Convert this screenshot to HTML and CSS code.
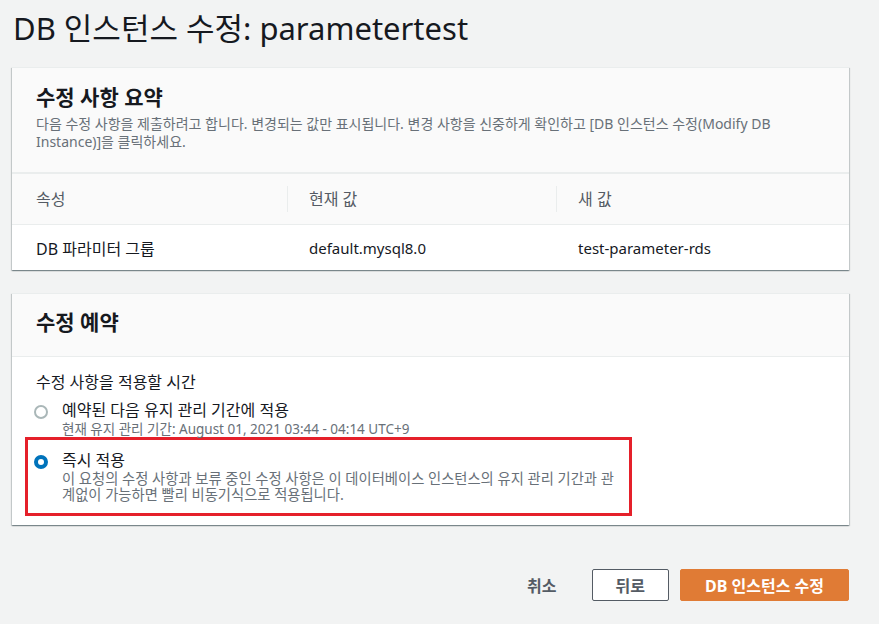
FILE: index.html
```html
<!DOCTYPE html>
<html lang="ko">
<head>
  <meta charset="utf-8">
  <title>DB 인스턴스 수정: parametertest</title>
  <link rel="stylesheet" href="styles.css">
</head>
<body>
  <div class="page">
    <h1 class="page-title">DB 인스턴스 수정: parametertest</h1>

    <div class="card">
      <div class="card-header">
        <h2>수정 사항 요약</h2>
        <p class="card-desc">다음 수정 사항을 제출하려고 합니다. 변경되는 값만 표시됩니다. 변경 사항을 신중하게 확인하고 [DB 인스턴스 수정(Modify DB Instance)]을 클릭하세요.</p>
      </div>
      <div class="diff-table">
        <div class="diff-head">
          <div class="cell">속성</div>
          <div class="cell sep">현재 값</div>
          <div class="cell sep">새 값</div>
        </div>
        <div class="diff-row">
          <div class="cell ko">DB 파라미터 그룹</div>
          <div class="cell">default.mysql8.0</div>
          <div class="cell">test-parameter-rds</div>
        </div>
      </div>
    </div>

    <div class="card">
      <div class="card-header short">
        <h2>수정 예약</h2>
      </div>
      <div class="card-body">
        <div class="field-label">수정 사항을 적용할 시간</div>

        <div class="option">
          <span class="radio"></span>
          <div class="option-text">
            <div class="option-label">예약된 다음 유지 관리 기간에 적용</div>
            <div class="option-sub">현재 유지 관리 기간: August 01, 2021 03:44 - 04:14 UTC+9</div>
          </div>
        </div>

        <div class="option highlight">
          <span class="radio checked"></span>
          <div class="option-text">
            <div class="option-label">즉시 적용</div>
            <div class="option-desc">이 요청의 수정 사항과 보류 중인 수정 사항은 이 데이터베이스 인스턴스의 유지 관리 기간과 관계없이 가능하면 빨리 비동기식으로 적용됩니다.</div>
          </div>
        </div>
      </div>
    </div>

    <div class="actions">
      <button class="btn btn-link">취소</button>
      <button class="btn btn-normal">뒤로</button>
      <button class="btn btn-primary">DB 인스턴스 수정</button>
    </div>
  </div>
</body>
</html>
```

FILE: styles.css
```css
body {
  margin: 0;
  background-color: #f2f3f3;
  font-family: "Noto Sans", "Noto Sans CJK KR", sans-serif;
  color: #16191f;
}
.page {
  padding: 11px 30px 0 12px;
}
.page-title {
  margin: 0 0 22px 1px;
  font-size: 31px;
  font-weight: 400;
  line-height: 34px;
}
.card {
  background-color: #fff;
  border-top: 1px solid #eaeded;
  box-shadow: 0 1px 1px 0 rgba(0, 28, 36, .3), 1px 1px 1px 0 rgba(0, 28, 36, .15), -1px 1px 1px 0 rgba(0, 28, 36, .15);
  margin-bottom: 23px;
}
.card-header {
  background-color: #fafafa;
  padding: 17px 24px 21px 24px;
}
.card-header h2 {
  margin: 0 0 6px 0;
  font-size: 21px;
  font-weight: 700;
  line-height: 24px;
}
.card-header.short {
  padding: 16px 24px 22px 24px;
  border-bottom: 1px solid #eaeded;
}
.card-header.short h2 {
  margin: 0;
}
.card-desc {
  margin: 0;
  max-width: 770px;
  font-size: 14px;
  line-height: 18px;
  color: #687078;
}
.diff-head,
.diff-row {
  display: grid;
  grid-template-columns: 275px 269px 1fr;
}
.diff-head {
  background-color: #fafafa;
  border-top: 2px solid #eaeded;
  border-bottom: 1px solid #eaeded;
  height: 50px;
  align-items: center;
  font-size: 16px;
  color: #545b64;
}
.diff-head .cell {
  padding-left: 24px;
  line-height: 26px;
}
.diff-head .cell.sep {
  border-left: 1px solid #eaeded;
  padding-left: 21px;
}
.diff-row {
  height: 45px;
  align-items: center;
  font-size: 15px;
}
.diff-row .cell {
  padding-left: 22px;
}
.diff-row .cell.ko {
  padding-left: 24px;
  font-size: 16px;
}
.card-body {
  padding: 14px 24px 9px 24px;
}
.field-label {
  font-size: 16px;
  line-height: 22px;
  margin-bottom: 6px;
}
.option {
  display: flex;
  align-items: flex-start;
}
.radio {
  flex: none;
  width: 14px;
  height: 14px;
  box-sizing: border-box;
  border: 2px solid #aab7b8;
  border-radius: 50%;
  background-color: #fff;
  margin: 6px 14px 0 -2px;
}
.radio.checked {
  border: 4px solid #0073bb;
}
.option-label {
  font-size: 16px;
  line-height: 22px;
}
.option-sub {
  font-size: 13.5px;
  line-height: 16px;
  color: #687078;
}
.option-desc {
  font-size: 14.3px;
  line-height: 16px;
  color: #687078;
}
.highlight {
  width: 607px;
  box-sizing: border-box;
  margin-left: -11px;
  border: 3px solid #e5202a;
  padding: 9px 3px 10px 8px;
}
.actions {
  display: flex;
  justify-content: flex-end;
  margin-top: 44px;
}
.btn {
  height: 32px;
  font-family: inherit;
  font-size: 16px;
  font-weight: 700;
  border-radius: 2px;
  color: #545b64;
  cursor: pointer;
}
.btn-link {
  background: none;
  border: none;
  padding: 0 35px 0 0;
}
.btn-normal {
  background-color: #fff;
  border: 1px solid #545b64;
  padding: 0 23px;
  margin-right: 11px;
}
.btn-primary {
  background-color: #e07b35;
  border: 1px solid #e07b35;
  color: #fff;
  padding: 0 24px;
}
```
